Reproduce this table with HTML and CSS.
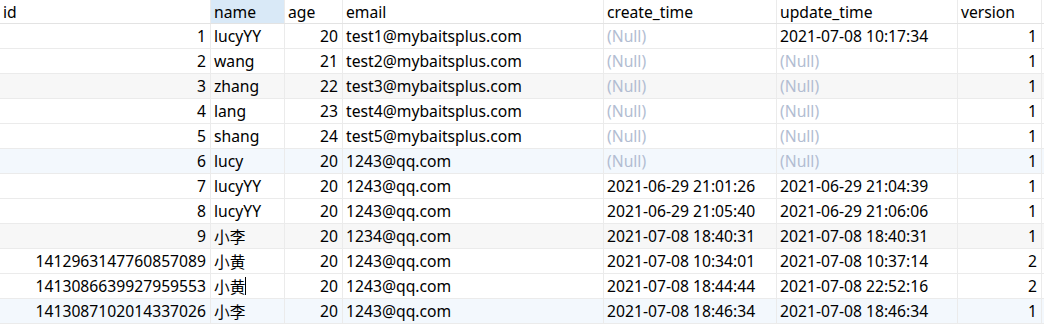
FILE: index.html
```html
<!DOCTYPE html>
<html lang="en">
<head>
    <meta charset="UTF-8">
    <title>user</title>
    <link rel="stylesheet" href="styles.css">
</head>
<body>
    <div class="grid">
        <div class="row head">
            <div class="cell">id</div>
            <div class="cell sorted">name</div>
            <div class="cell">age</div>
            <div class="cell">email</div>
            <div class="cell">create_time</div>
            <div class="cell">update_time</div>
            <div class="cell">version</div>
        </div>
        <div class="row">
            <div class="cell num">1</div><div class="cell">lucyYY</div><div class="cell num">20</div>
            <div class="cell">test1@mybaitsplus.com</div><div class="cell null">(Null)</div>
            <div class="cell">2021-07-08 10:17:34</div><div class="cell num">1</div>
        </div>
        <div class="row">
            <div class="cell num">2</div><div class="cell">wang</div><div class="cell num">21</div>
            <div class="cell">test2@mybaitsplus.com</div><div class="cell null">(Null)</div>
            <div class="cell null">(Null)</div><div class="cell num">1</div>
        </div>
        <div class="row gray">
            <div class="cell num">3</div><div class="cell">zhang</div><div class="cell num">22</div>
            <div class="cell">test3@mybaitsplus.com</div><div class="cell null">(Null)</div>
            <div class="cell null">(Null)</div><div class="cell num">1</div>
        </div>
        <div class="row">
            <div class="cell num">4</div><div class="cell">lang</div><div class="cell num">23</div>
            <div class="cell">test4@mybaitsplus.com</div><div class="cell null">(Null)</div>
            <div class="cell null">(Null)</div><div class="cell num">1</div>
        </div>
        <div class="row">
            <div class="cell num">5</div><div class="cell">shang</div><div class="cell num">24</div>
            <div class="cell">test5@mybaitsplus.com</div><div class="cell null">(Null)</div>
            <div class="cell null">(Null)</div><div class="cell num">1</div>
        </div>
        <div class="row blue">
            <div class="cell num">6</div><div class="cell">lucy</div><div class="cell num">20</div>
            <div class="cell">1243@qq.com</div><div class="cell null">(Null)</div>
            <div class="cell null">(Null)</div><div class="cell num">1</div>
        </div>
        <div class="row">
            <div class="cell num">7</div><div class="cell">lucyYY</div><div class="cell num">20</div>
            <div class="cell">1243@qq.com</div><div class="cell">2021-06-29 21:01:26</div>
            <div class="cell">2021-06-29 21:04:39</div><div class="cell num">1</div>
        </div>
        <div class="row">
            <div class="cell num">8</div><div class="cell">lucyYY</div><div class="cell num">20</div>
            <div class="cell">1243@qq.com</div><div class="cell">2021-06-29 21:05:40</div>
            <div class="cell">2021-06-29 21:06:06</div><div class="cell num">1</div>
        </div>
        <div class="row gray">
            <div class="cell num">9</div><div class="cell">小李</div><div class="cell num">20</div>
            <div class="cell">1234@qq.com</div><div class="cell">2021-07-08 18:40:31</div>
            <div class="cell">2021-07-08 18:40:31</div><div class="cell num">1</div>
        </div>
        <div class="row">
            <div class="cell num">1412963147760857089</div><div class="cell">小黄</div><div class="cell num">20</div>
            <div class="cell">1243@qq.com</div><div class="cell">2021-07-08 10:34:01</div>
            <div class="cell">2021-07-08 10:37:14</div><div class="cell num">2</div>
        </div>
        <div class="row">
            <div class="cell num">1413086639927959553</div><div class="cell">小黄<span class="caret"></span></div><div class="cell num">20</div>
            <div class="cell">1243@qq.com</div><div class="cell">2021-07-08 18:44:44</div>
            <div class="cell">2021-07-08 22:52:16</div><div class="cell num">2</div>
        </div>
        <div class="row blue">
            <div class="cell num">1413087102014337026</div><div class="cell">小李</div><div class="cell num">20</div>
            <div class="cell">1243@qq.com</div><div class="cell">2021-07-08 18:46:34</div>
            <div class="cell">2021-07-08 18:46:34</div><div class="cell num">1</div>
        </div>
    </div>
</body>
</html>
```

FILE: styles.css
```css
body {
    margin: 0;
    background: #ffffff;
    font-family: "Noto Sans", "Noto Sans CJK SC", sans-serif;
    font-size: 15.7px;
    color: #000000;
}
.grid {
    width: 1044px;
}
.row {
    display: grid;
    grid-template-columns: 211px 74px 58px 261px 173px 181px 84px;
    height: 25px;
    box-sizing: border-box;
    border-bottom: 1px solid #ebebeb;
}
.row.head {
    height: 24px;
    border-bottom-color: #e3e3e3;
}
.row.gray {
    background-color: #f7f7f7;
}
.row.blue {
    background-color: #f3f8fd;
}
.cell {
    box-sizing: border-box;
    border-right: 1px solid #ebebeb;
    padding: 0 4px 0 3px;
    display: flex;
    align-items: center;
    white-space: nowrap;
    overflow: hidden;
}
.cell.num {
    justify-content: flex-end;
}
.cell.sorted {
    background-color: #d9e9f7;
}
.cell.null {
    color: #b2bdd2;
}
.caret {
    display: inline-block;
    width: 0;
    height: 18px;
    border-left: 1px solid #000000;
}
```
